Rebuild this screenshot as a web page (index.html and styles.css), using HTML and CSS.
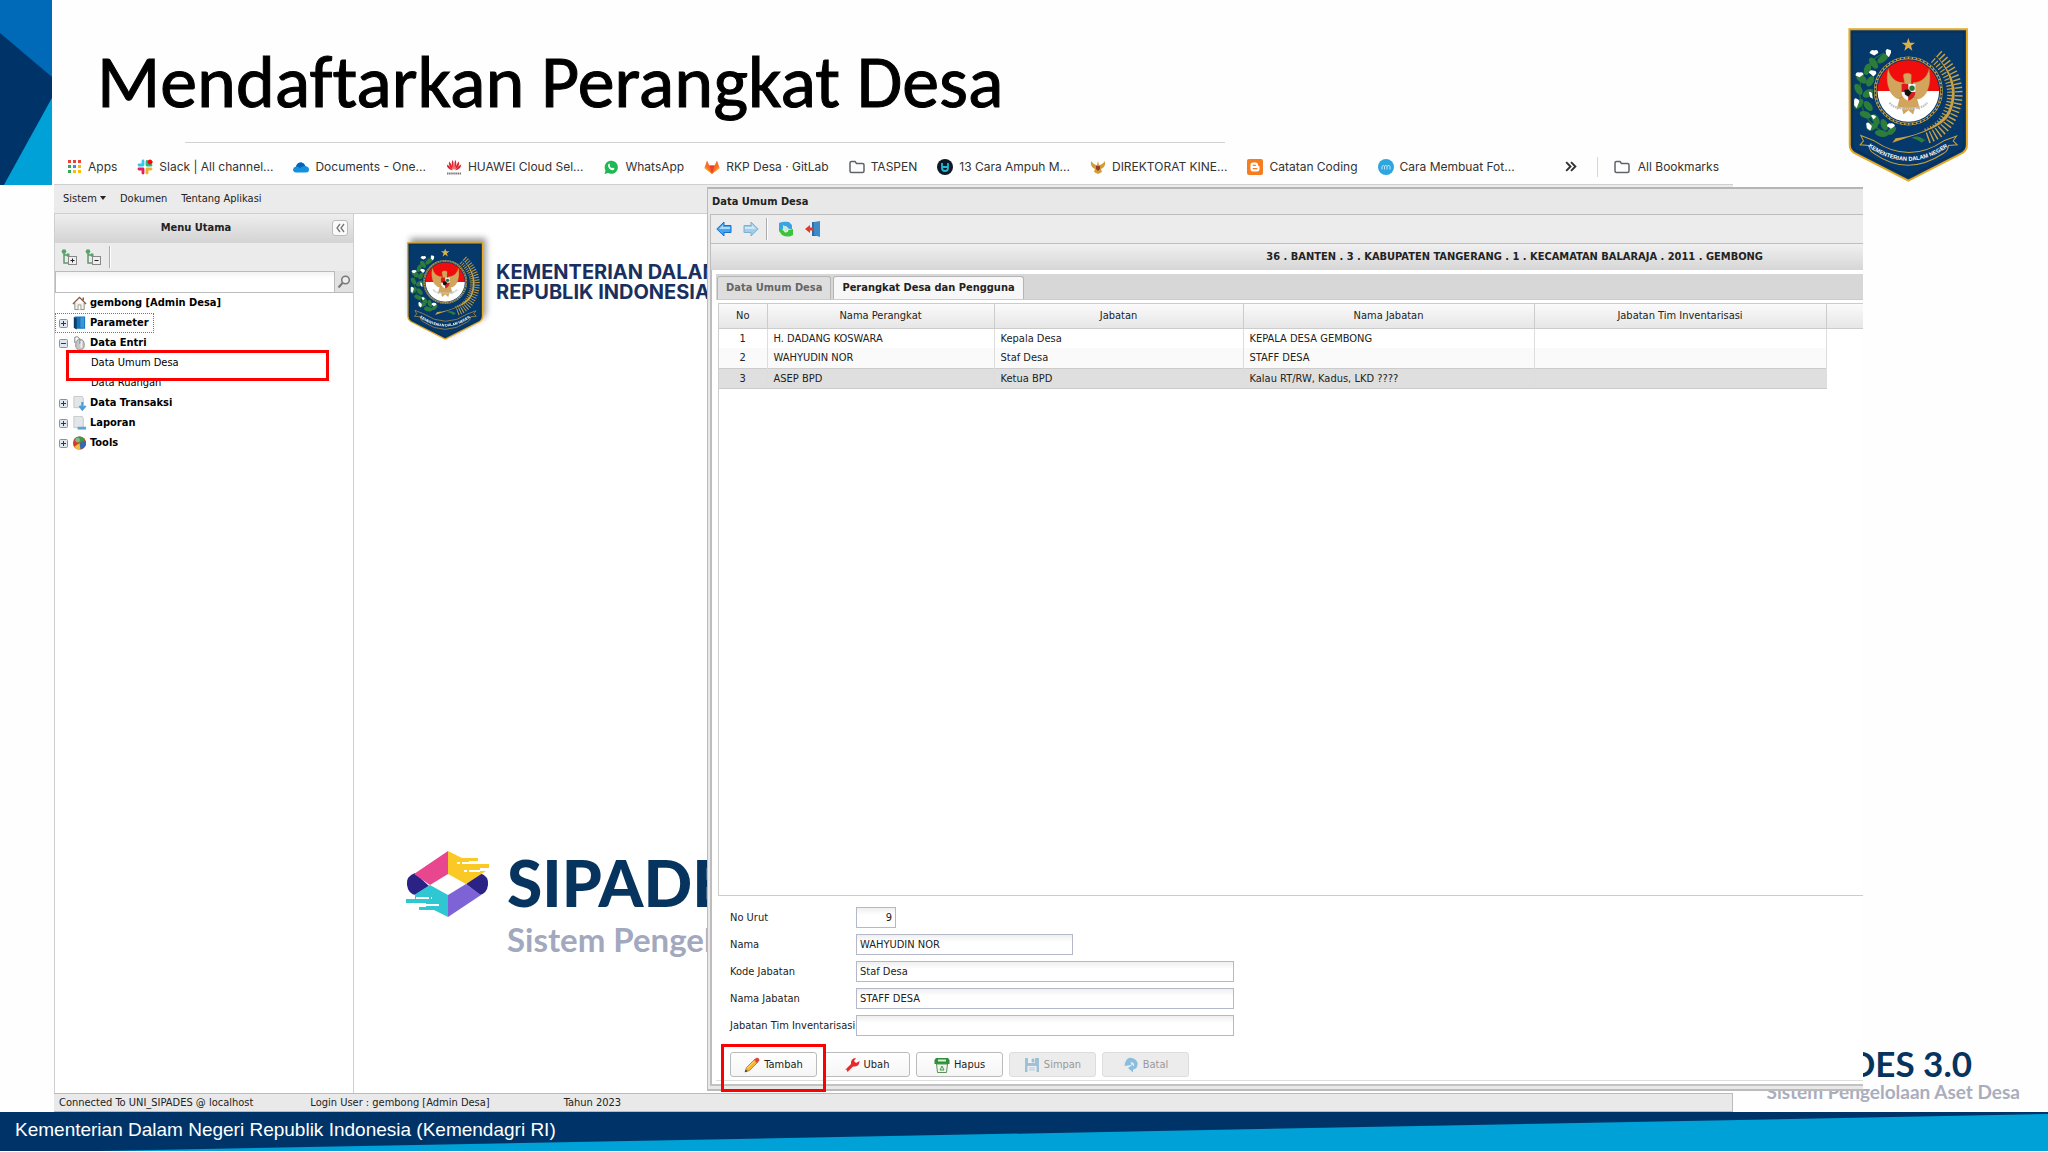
FILE: index.html
```
<!DOCTYPE html>
<html lang="id">
<head>
    <meta charset="UTF-8">
    <meta name="viewport" content="width=device-width, initial-scale=1.0">
    <title>Mendaftarkan Perangkat Desa</title>
    <link rel="stylesheet" href="styles.css">
</head>
<body>

<!-- shared drawings -->
<svg class="defs" width="0" height="0" aria-hidden="true">
  <symbol id="emblem" viewBox="82 55 358 460">
    <path d="M86 59H437V404Q437 420 424 428L262 511L100 428Q87 420 87 404Z" fill="#06396b" stroke="#e5a823" stroke-width="6"/>
    <path d="M95 67H428V402Q428 414 418 420L262 500L105 420Q96 414 96 402Z" fill="none" stroke="#0a2c52" stroke-width="3"/>
    <path d="M262 85l5 14 15 0-12 9 4 15-12-9-12 9 4-15-12-9 15 0z" fill="#d9b04c"/>
    <!-- cotton -->
    <path d="M190 130C140 150 110 210 118 260C124 320 160 365 215 372" fill="none" stroke="#1d6b3a" stroke-width="4"/>
    <g fill="#2c7d3c">
      <ellipse cx="186" cy="146" rx="20" ry="10" transform="rotate(-40 186 146)"/>
      <ellipse cx="158" cy="160" rx="19" ry="10" transform="rotate(55 158 160)"/>
      <ellipse cx="140" cy="178" rx="18" ry="10" transform="rotate(-70 140 178)"/>
      <ellipse cx="122" cy="206" rx="19" ry="11" transform="rotate(40 122 206)"/>
      <ellipse cx="148" cy="214" rx="17" ry="10" transform="rotate(-60 148 214)"/>
      <ellipse cx="113" cy="238" rx="18" ry="10" transform="rotate(60 113 238)"/>
      <ellipse cx="142" cy="250" rx="18" ry="11" transform="rotate(-30 142 250)"/>
      <ellipse cx="114" cy="282" rx="18" ry="10" transform="rotate(-50 114 282)"/>
      <ellipse cx="142" cy="288" rx="18" ry="10" transform="rotate(50 142 288)"/>
      <ellipse cx="134" cy="314" rx="18" ry="10" transform="rotate(20 134 314)"/>
      <ellipse cx="164" cy="328" rx="18" ry="10" transform="rotate(60 164 328)"/>
      <ellipse cx="154" cy="350" rx="18" ry="10" transform="rotate(-20 154 350)"/>
      <ellipse cx="190" cy="344" rx="18" ry="10" transform="rotate(70 190 344)"/>
      <ellipse cx="182" cy="370" rx="20" ry="10" transform="rotate(10 182 370)"/>
      <ellipse cx="212" cy="362" rx="16" ry="9" transform="rotate(-40 212 362)"/>
      <path d="M262 382Q290 372 312 390L302 398Q286 384 262 382Z"/>
    </g>
    <g fill="#fff">
      <path d="M146 130q4-12 14-8q12-4 12 8l-12 7z"/>
      <path d="M194 124q4-10 10-4q8-2 6 10l-6 12-8-8z"/>
      <path d="M104 196q2-12 12-8q10-4 12 6l-12 8z"/>
      <path d="M144 188q4-10 12-6q12 0 10 10l-8 8z"/>
      <path d="M100 270q2-8 8-4q10 4 6 12l-6 16-8-8z"/>
      <path d="M144 246q8-2 10 6l2 14-8-4z"/>
      <path d="M136 340q6-6 10 0q8 6 6 12l-4 10-10-8z"/>
      <path d="M198 348q2-10 10-8q12-2 14 8l-12 8z"/>
      <path d="M150 316q10-4 16 4l-8 8z"/>
    </g>
    <!-- rice -->
    <path d="M345 140C400 190 415 250 388 310C372 345 350 368 310 380" fill="none" stroke="#c9a042" stroke-width="46" stroke-dasharray="4 7"/>
    <path d="M330 130C400 190 412 250 385 310C365 352 300 372 214 398" fill="none" stroke="#06396b" stroke-width="6"/>
    <path d="M340 134C402 190 414 250 387 310C365 355 300 368 214 398L224 384C290 378 350 350 380 306C404 250 394 190 340 134Z" fill="#c9a042"/>
    <circle cx="262" cy="243" r="106" fill="#06396b"/>
    <circle cx="262" cy="243" r="99" fill="none" stroke="#c9a042" stroke-width="8"/>
    <circle cx="262" cy="243" r="99" fill="none" stroke="#06396b" stroke-width="4" stroke-dasharray="8 4"/>
    <path d="M170 243a92 92 0 0 1 184 0z" fill="#f20d0d"/>
    <path d="M170 243a92 92 0 0 0 184 0z" fill="#fff"/>
    <!-- garuda -->
    <g fill="#d3a55c" stroke="#a97b35" stroke-width="1">
      <path d="M248 218C222 218 206 200 202 176C194 210 200 240 218 258C230 270 242 268 250 262Z"/>
      <path d="M276 218C302 218 320 200 324 176C330 210 326 240 308 258C296 270 284 268 276 262Z"/>
      <path d="M250 226C252 206 242 198 250 192Q262 186 271 194L270 226Z"/>
      <path d="M238 262L228 298L242 290L248 312L262 300L276 312L282 290L296 298L286 262Z"/>
    </g>
    <path d="M242 222h20v24h-20z" fill="#e01818"/>
    <path d="M262 222h21v24h-21z" fill="#f4f4f4"/>
    <path d="M242 246h20v27q-20-8-20-27z" fill="#f4f4f4"/>
    <path d="M262 246h21q0 18-21 27z" fill="#d42020"/>
    <circle cx="273" cy="235" r="8" fill="#26783a"/>
    <path d="M250 240l12-2 10 10-10 12-10-6z" fill="#111"/>
    <path d="M206 278q8 12 22 14q34 8 68 0q14-2 22-14" fill="none" stroke="#c4c4c4" stroke-width="7" stroke-dasharray="5 2"/>
    <!-- ribbon -->
    <path d="M160 392L120 376L128 392L118 404L144 406Q146 424 160 430Q260 500 366 430Q380 424 382 406L408 404L396 392L406 378L368 392Q264 462 160 392Z" fill="#06396b" stroke="#c9a042" stroke-width="3"/>
    <path id="ribbon-line" d="M146 412Q262 492 380 410" fill="none"/>
    <text class="ribbon-text"><textPath href="#ribbon-line" startOffset="50%">KEMENTERIAN DALAM NEGERI</textPath></text>
  </symbol>
  <symbol id="folder" viewBox="0 0 16 16">
    <path d="M1 4Q1 2.500 2.500 2.500H6L7.500 4.500H13.500Q15 4.500 15 6V12Q15 13.500 13.500 13.500H2.500Q1 13.500 1 12Z" fill="none" stroke="#5f6368" stroke-width="1.500"/>
  </symbol>
  <symbol id="plus" viewBox="0 0 9 9">
    <rect x=".5" y=".5" width="8" height="8" rx="1" fill="#dfe6ee" stroke="#8393a7"/>
    <path d="M2 4.500H7M4.500 2V7" stroke="#223a5e"/>
  </symbol>
  <symbol id="minus" viewBox="0 0 9 9">
    <rect x=".5" y=".5" width="8" height="8" rx="1" fill="#dfe6ee" stroke="#8393a7"/>
    <path d="M2 4.500H7" stroke="#223a5e"/>
  </symbol>
</svg>

<div class="slide">
  <svg class="corner" viewBox="0 0 52 185" aria-hidden="true">
    <path d="M0 0H52V185H0Z" fill="#0069b8"/>
    <path d="M0 33L52 77V98L4 185H0Z" fill="#003468"/>
    <path d="M52 98V185H4Z" fill="#00a1d6"/>
  </svg>

  <header class="slide-head">
    <h1>Mendaftarkan Perangkat Desa</h1>
    <svg class="ministry" role="img" aria-label="Kementerian Dalam Negeri"><use href="#emblem"/></svg>
  </header>

  <div class="brand">
    <p class="brand-name">DES 3.0</p>
    <p class="brand-sub">Sistem Pengelolaan Aset Desa</p>
  </div>

  <main class="shot">
    <nav class="bookmarks">
      <a href="#"><svg viewBox="0 0 16 16"><g fill="#ea4335"><path d="M2 1h3v3H2zM7 1h3v3H7zM12 1h3v3h-3z"/></g><path d="M2 6h3v3H2z" fill="#34a853"/><path d="M7 6h3v3H7z" fill="#4285f4"/><path d="M12 6h3v3h-3z" fill="#fbbc04"/><path d="M2 11h3v3H2z" fill="#34a853"/><path d="M7 11h3v3H7zM12 11h3v3h-3z" fill="#fbbc04"/></svg>Apps</a>
      <a href="#"><svg viewBox="0 0 16 16" fill="none" stroke-width="2.800" stroke-linecap="round"><path d="M6 2V6M2 6H6" stroke="#36c5f0"/><path d="M10 2.500V6M10 6h4" stroke="#2eb67d"/><path d="M10 10v4M10 10h4" stroke="#ecb22e"/><path d="M6 10v4M2 10h4" stroke="#e01e5a"/><circle cx="13" cy="3" r="2" fill="#f00" stroke="#f00" stroke-width="1"/></svg>Slack | All channel...</a>
      <a href="#"><svg viewBox="0 0 16 16"><path d="M3 13.500Q0 13 0 10.500Q.3 8 3 7.500Q4.500 3 8.500 3.500Q11.500 4 12.300 7Q16 7.500 16 10.500Q16 13.500 13 13.500Z" fill="#1490df"/><path d="M3 7.500Q4.500 3 8.500 3.500Q11.500 4 12.300 7Q9 7 7 9Q5 7 3 7.500Z" fill="#0364b8"/></svg>Documents - One...</a>
      <a href="#"><svg viewBox="0 0 16 16"><g fill="#e2232e"><path d="M7.600 11Q4.500 5 6.500 1Q8 2 7.600 11ZM8.400 11Q11.500 5 9.500 1Q8 2 8.400 11Z"/><path d="M7 11Q2 7 3 2.500Q6 5 7 11ZM9 11Q14 7 13 2.500Q10 5 9 11Z"/><path d="M6.500 11.500Q1 10 .8 5.500Q4.500 7 6.500 11.500ZM9.500 11.500Q15 10 15.200 5.500Q11.500 7 9.500 11.500Z"/></g><path d="M1 14.500H15" stroke="#777" stroke-width="2" stroke-dasharray="1.500 .6"/></svg>HUAWEI Cloud Sel...</a>
      <a href="#"><svg viewBox="0 0 16 16"><path d="M1.500 15L2.500 11.500A6.600 6.600 0 1 1 5 14Z" fill="#1fb855"/><path d="M5.500 5Q6.500 3.800 7 6Q6.500 7 7 7.500Q8 9 9 9Q10 8.400 11.500 9.500Q11 11.500 9.500 11.300Q5.500 10.500 5 6.500Z" fill="#fff"/></svg>WhatsApp</a>
      <a href="#"><svg viewBox="0 0 16 16"><path d="M8 15L0.500 9L3 1.500L5.500 6.500H10.500L13 1.500L15.500 9Z" fill="#fc6d26"/><path d="M8 15L5.500 6.500H10.500Z" fill="#e24329"/><path d="M8 15L.5 9L2 8ZM8 15L15.500 9L14 8Z" fill="#fca326"/></svg>RKP Desa · GitLab</a>
      <a href="#"><svg><use href="#folder"/></svg>TASPEN</a>
      <a href="#"><svg viewBox="0 0 16 16"><circle cx="8" cy="8" r="8" fill="#0b1a24"/><path d="M5 4V9Q5 12 8 12T11 9V4M5 8H11" fill="none" stroke="#23b7d9" stroke-width="1.800"/></svg>13 Cara Ampuh M...</a>
      <a href="#"><svg viewBox="0 0 16 16"><path d="M7 6Q4 6 1 2Q0 8 5 10L4 13L8 15L12 13L11 10Q16 8 15 2Q12 6 9 6L8 2Z" fill="#d29c36"/><path d="M6 7H10V10L8 12L6 10Z" fill="#9c3b23"/></svg>DIREKTORAT KINE...</a>
      <a href="#"><svg viewBox="0 0 16 16"><rect width="16" height="16" rx="2" fill="#f57d20"/><path d="M6 3.500H8.500Q11 3.500 11 6Q11 7 12 7Q12.500 7.200 12.500 8V10Q12.500 12.500 10 12.500H6Q3.500 12.500 3.500 10V6Q3.500 3.500 6 3.500Z" fill="#fff"/><path d="M6.200 6.300H8.500M6.200 9.700H9.800" stroke="#f57d20" stroke-width="1.300" stroke-linecap="round"/></svg>Catatan Coding</a>
      <a href="#"><svg viewBox="0 0 16 16"><circle cx="8" cy="8" r="8" fill="#2da6e0"/><path d="M4 10.500V7.500Q6 5 6.500 7.500V10.500M6.500 7.500Q8.500 5 9 7.500V10.500M9 7.500Q11.500 5 12 7.500V10.500" fill="none" stroke="#bfe6f8"/></svg>Cara Membuat Fot...</a>
      <button class="more" type="button" aria-label="Lainnya"><svg viewBox="0 0 12 12"><path d="M2 2L6 6L2 10M6.500 2L10.500 6L6.500 10" fill="none" stroke="#333" stroke-width="1.800"/></svg></button>
      <a class="all" href="#"><svg><use href="#folder"/></svg>All Bookmarks</a>
    </nav>

    <div class="app">
      <nav class="menubar">
        <button type="button">Sistem <span class="caret"></span></button>
        <button type="button">Dokumen</button>
        <button type="button">Tentang Aplikasi</button>
      </nav>

      <div class="workspace">
        <aside class="sidebar">
          <div class="side-head">
            <h2>Menu Utama</h2>
            <button type="button" aria-label="Ciutkan"><svg viewBox="0 0 10 10"><path d="M5 1L2 5L5 9M9 1L6 5L9 9" fill="none" stroke="#777" stroke-width="1.300"/></svg></button>
          </div>
          <div class="side-tools">
            <button type="button" aria-label="Buka semua"><svg viewBox="0 0 16 16"><path d="M3 3V14H7M3 6H7" fill="none" stroke="#5c9a6a" stroke-width="1.500"/><circle cx="3" cy="2.500" r="2.300" fill="#58a468"/><circle cx="7" cy="6" r="1.700" fill="#58a468"/><rect x="7.500" y="7.500" width="8" height="8" fill="#eee" stroke="#888"/><path d="M9.500 11.500h4M11.500 9.500v4" stroke="#222"/></svg></button>
            <button type="button" aria-label="Tutup semua"><svg viewBox="0 0 16 16"><path d="M3 3V14H7M3 6H7" fill="none" stroke="#5c9a6a" stroke-width="1.500"/><circle cx="3" cy="2.500" r="2.300" fill="#58a468"/><circle cx="7" cy="6" r="1.700" fill="#58a468"/><rect x="7.500" y="7.500" width="8" height="8" fill="#eee" stroke="#888"/><path d="M9.500 11.500h4" stroke="#222"/></svg></button>
            <span class="sep"></span>
          </div>
          <form class="search">
            <input type="text" aria-label="Cari menu">
            <button type="button" aria-label="Cari"><svg viewBox="0 0 14 14"><circle cx="8.500" cy="5" r="3.800" fill="#eee" stroke="#777" stroke-width="1.500"/><path d="M5.500 8L1.500 12.500" stroke="#777" stroke-width="2"/></svg></button>
          </form>
          <ul class="tree">
            <li><a href="#"><span class="twig"></span><svg viewBox="0 0 16 16"><path d="M3 8V15H13V8" fill="#f7f0e2" stroke="#8a8a8a"/><path d="M1 9L8 2L15 9M12 5V2" fill="none" stroke="#8b5a44" stroke-width="1.500"/><path d="M6.500 15V10H9.500V15" fill="#fff" stroke="#999"/></svg>gembong [Admin Desa]</a></li>
            <li><a class="focused" href="#"><svg class="twig"><use href="#plus"/></svg><svg viewBox="0 0 16 16"><path d="M3 1H14V14H4L2 13V2Z" fill="#1874b8"/><path d="M2 2L5 3V15L2 13Z" fill="#0c3e66"/><path d="M9 2H13V13H9Z" fill="#3a98d8"/></svg>Parameter</a></li>
            <li><a href="#"><svg class="twig"><use href="#minus"/></svg><svg viewBox="0 0 16 16"><rect x="4" y="4" width="9" height="11.500" rx="4.500" fill="#c6c6c6" stroke="#8a8a8a"/><path d="M8.500 5V9M8 4Q7 0 3 2V8" fill="none" stroke="#777"/><path d="M10 6V13" stroke="#eee" stroke-width="2"/></svg>Data Entri</a>
              <ul>
                <li class="marked"><a href="#">Data Umum Desa</a></li>
                <li><a href="#">Data Ruangan</a></li>
              </ul>
            </li>
            <li><a href="#"><svg class="twig"><use href="#plus"/></svg><svg viewBox="0 0 16 16"><path d="M2 1H11L12 3V13H2Z" fill="#e3e6e8" stroke="#c3c8cc"/><path d="M11 7V14M8 11L11 15L14.500 11" fill="none" stroke="#4d9bd0" stroke-width="2.200"/></svg>Data Transaksi</a></li>
            <li><a href="#"><svg class="twig"><use href="#plus"/></svg><svg viewBox="0 0 16 16"><path d="M2 1H11L12 3V13H2Z" fill="#e3e6e8" stroke="#c3c8cc"/><path d="M6 13.500H15" stroke="#5da5d4" stroke-width="3"/></svg>Laporan</a></li>
            <li><a href="#"><svg class="twig"><use href="#plus"/></svg><svg viewBox="0 0 16 16"><circle cx="8" cy="8" r="7" fill="#d63a2c"/><path d="M8 8L2 4.500A7 7 0 0 1 14 4.500Z" fill="#3b9a4a"/><path d="M8 8L14.500 5.500A7 7 0 0 1 9 15Z" fill="#3569b4"/><path d="M8 8L9 15A7 7 0 0 1 2.500 12Z" fill="#eec23c"/><circle cx="6" cy="5" r="2.500" fill="#fff" opacity=".35"/></svg>Tools</a></li>
          </ul>
        </aside>

        <section class="desktop">
          <div class="org">
            <svg class="org-logo"><use href="#emblem"/></svg>
            <p>KEMENTERIAN DALAM<br>REPUBLIK INDONESIA</p>
          </div>
          <div class="product">
            <svg class="product-logo" viewBox="0 0 83 66" aria-hidden="true">
              <path d="M9 22Q0 25 1 34Q2 42 9 44L23 35Z" fill="#2b2286"/>
              <path d="M74 22Q83 25 82 34Q81 42 74 44L60 33Z" fill="#2b2286"/>
              <path d="M42 0V23L24 34L8 23Z" fill="#e8478f"/>
              <path d="M42 0L56 7H72V10H63V13H83V17H74V20H80L60 33L42 23Z" fill="#fbc926"/>
              <path d="M51 12H63M58 20H74" stroke="#fff" stroke-width="2" stroke-dasharray="3 2 20"/>
              <path d="M42 44V66L28 59H13V56H20V52H0V48H9V44H8L24 34Z" fill="#2fc8d2"/>
              <path d="M10 47H26M20 54H34" stroke="#fff" stroke-width="2" stroke-dasharray="13 2 3"/>
              <path d="M42 44L60 33L75 44L42 66Z" fill="#7e63d6"/>
            </svg>
            <div>
              <p class="product-name">SIPADES</p>
              <p class="product-sub">Sistem Pengelolaan</p>
            </div>
          </div>
        </section>
      </div>

      <footer class="status">
        <span>Connected To UNI_SIPADES @ localhost</span>
        <span>Login User : gembong [Admin Desa]</span>
        <span>Tahun 2023</span>
      </footer>

      <section class="window">
        <h2 class="win-title">Data Umum Desa</h2>
        <div class="win-tools">
          <button type="button" aria-label="Sebelumnya"><svg viewBox="0 0 16 16"><path d="M.8 8L8 1V4.500H15V11.500H8V15Z" fill="#45a5f0" stroke="#1d6fc4"/><path d="M3 8L7 4V6H14V8Z" fill="#a7dafb"/></svg></button>
          <button type="button" aria-label="Berikutnya"><svg viewBox="0 0 16 16"><path d="M15.200 8L8 1V4.500H1V11.500H8V15Z" fill="#9fcdea" stroke="#7fb0d2"/><path d="M13 8L9 4V6H2V8Z" fill="#cfe9f8"/></svg></button>
          <span class="sep"></span>
          <button type="button" aria-label="Muat ulang"><svg viewBox="0 0 16 16"><path d="M1 9V2Q5 0 11 1L14 4V8H11L8 5Q5 5 5 8Z" fill="#3aa5e0"/><path d="M5 4L11 8L8 11L5 8Z" fill="#c4ecd8"/><path d="M15 8V14Q10 17 4 14L1 10V8H4L7 11.500Q10 12 10.500 9Z" fill="#3cc23b"/></svg></button>
          <button type="button" aria-label="Keluar"><svg viewBox="0 0 16 16"><path d="M7 1H15V15H7Z" fill="#2d6da8"/><path d="M9 1L15 0V16L9 14Z" fill="#3d8bc9"/><path d="M0 8L5 4V6.500H9V9.500H5V12Z" fill="#df3a30"/></svg></button>
        </div>
        <p class="win-path">36 . BANTEN . 3 . KABUPATEN TANGERANG . 1 . KECAMATAN BALARAJA . 2011 . GEMBONG</p>
        <div class="win-body">
          <div class="tabs" role="tablist">
            <button type="button" role="tab">Data Umum Desa</button>
            <button class="active" type="button" role="tab" aria-selected="true">Perangkat Desa dan Pengguna</button>
          </div>
          <div class="grid">
            <table>
              <thead>
                <tr><th class="c-no">No</th><th class="c-nama">Nama Perangkat</th><th class="c-jab">Jabatan</th><th class="c-njab">Nama Jabatan</th><th class="c-tim">Jabatan Tim Inventarisasi</th><th></th></tr>
              </thead>
              <tbody>
                <tr><td>1</td><td>H. DADANG KOSWARA</td><td>Kepala Desa</td><td>KEPALA DESA GEMBONG</td><td></td></tr>
                <tr><td>2</td><td>WAHYUDIN NOR</td><td>Staf Desa</td><td>STAFF DESA</td><td></td></tr>
                <tr class="selected"><td>3</td><td>ASEP BPD</td><td>Ketua BPD</td><td>Kalau RT/RW, Kadus, LKD ????</td><td></td></tr>
              </tbody>
            </table>
          </div>
          <form class="detail">
            <div class="field"><label for="urut">No Urut</label><input class="w-no" id="urut" type="text" value="9"></div>
            <div class="field"><label for="nama">Nama</label><input class="w-nama" id="nama" type="text" value="WAHYUDIN NOR"></div>
            <div class="field"><label for="kode">Kode Jabatan</label><input id="kode" type="text" value="Staf Desa"></div>
            <div class="field"><label for="njab">Nama Jabatan</label><input id="njab" type="text" value="STAFF DESA"></div>
            <div class="field"><label for="tim">Jabatan Tim Inventarisasi</label><input id="tim" type="text"></div>
            <div class="actions">
              <span class="marked-btn"><button type="button"><svg viewBox="0 0 16 16"><path d="M1 15L2.500 10.500L11 2L14 5L5.500 13.500Z" fill="#f7b42c" stroke="#b9731a" stroke-width=".8"/><path d="M10 3L12 1Q14 0 15 2Q16 3 15 4L13 6Z" fill="#e0433a"/><path d="M1 15L1.800 12.500L3.500 14.200Z" fill="#333"/><path d="M3.500 11L11 3.500" stroke="#fde08a"/></svg>Tambah</button></span>
              <button type="button"><svg viewBox="0 0 16 16"><path d="M1 13L7 7Q6.500 3 9.500 1.500L12 1L10 4L12 6L15.500 4Q15.500 9 11 9.500L9 9.500L3.500 15L2.500 12.500Z" fill="#e8282b"/></svg>Ubah</button>
              <button type="button"><svg viewBox="0 0 16 16"><path d="M2 1H14L15.500 3V7H.5V3Z" fill="#2f8f3a"/><path d="M2.500 7H13.500L12.500 15.500H3.500Z" fill="#eef5ec" stroke="#5f8f5c"/><path d="M4 3.500H12" stroke="#d9f5d4" stroke-width="2"/><path d="M8 9L6 13H10Z" fill="none" stroke="#3c9a40"/></svg>Hapus</button>
              <button type="button" disabled><svg viewBox="0 0 16 16"><path d="M1 1H15V15H1Z" fill="#6ba6cc"/><path d="M4 1H11V6H4ZM3.500 9H12.500V15H3.500Z" fill="#eef4f8"/><path d="M8 2H10V5H8ZM5 11H11M5 13H11" stroke="#7c9db3" stroke-width=".8" fill="#7c9db3"/></svg>Simpan</button>
              <button type="button" disabled><svg viewBox="0 0 16 16"><path d="M2 6Q4 0 9 1Q15 2.500 14.500 8Q14 12 10 12.500V15.500L5 11L10 7.500V9.500Q11.500 9 11 7Q10 4.500 7.500 5.500L8.500 8L1.500 9Z" fill="#4aa0d6"/></svg>Batal</button>
            </div>
          </form>
        </div>
      </section>
    </div>
  </main>

  <footer class="slide-foot">
    <svg viewBox="0 0 2048 38" preserveAspectRatio="none" aria-hidden="true"><path d="M100 38L2048 2V38Z" fill="#00a1d6"/></svg>
    <p>Kementerian Dalam Negeri Republik Indonesia (Kemendagri RI)</p>
  </footer>
</div>

</body>
</html>
```
FILE: styles.css
```
*{
  margin: 0;
  padding: 0;
  box-sizing: border-box;
}
body{
  background: #fefefe;
  font-family: "DejaVu Sans Condensed", "Noto Sans", sans-serif;
  font-size: 11px;
  line-height: 20px;
  color: #222;
}
button, input{
  font: inherit;
  color: inherit;
}
button{
  border: 0;
  background: none;
}
a{
  color: inherit;
  text-decoration: none;
}
ul{
  list-style: none;
}
.defs{
  display: none;
}
.slide{
  position: relative;
  display: flex;
  flex-direction: column;
  min-height: 100vh;
  overflow: hidden;
}
.corner{
  position: absolute;
  top: 0;
  left: 0;
  width: 52px;
  height: 185px;
}

/* slide heading */
.slide-head{
  display: flex;
  justify-content: space-between;
  height: 142px;
  padding: 28px 80px 0 97px;
}
h1{
  font-family: Carlito, Lato, sans-serif;
  font-size: 74px;
  font-weight: 400;
  line-height: 108px;
  color: #000;
  white-space: nowrap;
  font-variant-ligatures: none;
  -webkit-text-stroke: 1px #000;
}
.ministry{
  width: 120px;
  height: 154px;
}
.ribbon-text{
  font-family: "Liberation Sans", sans-serif;
  font-size: 17px;
  font-weight: bold;
  fill: #fff;
  text-anchor: middle;
}

/* product name behind the window */
.brand{
  position: absolute;
  right: 28px;
  bottom: 49px;
  font-family: Lato, sans-serif;
  font-weight: bold;
  text-align: right;
}
.brand-name{
  padding-right: 48px;
  font-size: 35px;
  line-height: 36px;
  color: #07345f;
}
.brand-sub{
  font-size: 19px;
  line-height: 22px;
  color: #a9adbd;
}

.shot{
  position: relative;
  flex: 1;
  display: flex;
  flex-direction: column;
  margin: 0 315px 0 54px;
}
.bookmarks{
  display: flex;
  align-items: center;
  gap: 20px;
  height: 43px;
  padding: 7px 14px 0 12px;
  border-bottom: 1px solid #cfcfcf;
  font-family: Inter, sans-serif;
  font-size: 12px;
  color: #333;
  white-space: nowrap;
}
.bookmarks::before{
  content: "";
  position: absolute;
  top: 0;
  left: 131px;
  right: 508px;
  border-top: 1px solid #d2d2d2;
}
.bookmarks a{
  display: flex;
  align-items: center;
  gap: 6px;
}
.bookmarks svg{
  width: 16px;
  height: 16px;
}
.bookmarks .more{
  display: flex;
  margin-left: auto;
}
.more svg{
  width: 13px;
  height: 13px;
}
.bookmarks .all{
  gap: 8px;
  padding-left: 16px;
  border-left: 1px solid #d5d5dd;
}

/* application */
.app{
  position: relative;
  flex: 1;
  display: flex;
  flex-direction: column;
}
.menubar{
  display: flex;
  gap: 14px;
  height: 29px;
  padding: 4px 9px;
  background: #ebebeb;
  border-bottom: 1px solid #cfcfcf;
}
.caret{
  display: inline-block;
  border: 3px solid transparent;
  border-top: 4px solid #222;
  border-bottom: 0;
  vertical-align: 2px;
}
.workspace{
  flex: 1;
  display: flex;
}
.sidebar{
  width: 300px;
  background: #fff;
  border: solid #cfcfcf;
  border-width: 0 1px;
}
.side-head{
  display: flex;
  align-items: center;
  height: 29px;
  padding: 0 5px 2px;
  background: linear-gradient(#eee, #d3d3d3);
}
h2{
  font-size: 11px;
}
.side-head h2{
  flex: 1;
  text-align: center;
}
.side-head button{
  display: flex;
  padding: 2px;
  background: #fafafa;
  border: 1px solid #bbb;
  border-radius: 3px;
}
.side-head svg{
  width: 10px;
  height: 10px;
}
.side-tools{
  display: flex;
  align-items: center;
  gap: 8px;
  height: 28px;
  padding-left: 6px;
  background: #ebebeb;
}
.side-tools button, .win-tools button{
  display: flex;
}
.side-tools svg, .win-tools svg{
  width: 16px;
  height: 16px;
}
.sep{
  width: 2px;
  height: 22px;
  background: #fff;
  border-left: 1px solid #aaa;
}
.search{
  display: flex;
  height: 22px;
}
.search input{
  flex: 1;
  min-width: 0;
  border: 1px solid #bbb;
  background: linear-gradient(#f2f2f2, #fff 6px);
}
.search button{
  display: flex;
  align-items: center;
  padding: 0 2px;
  background: #e2e2e2;
  border-bottom: 1px solid #bbb;
}
.search svg{
  width: 14px;
  height: 14px;
}
.tree{
  color: #000;
}
.tree a{
  display: flex;
  align-items: center;
  gap: 3px;
  width: fit-content;
  height: 20px;
  padding: 0 5px 0 4px;
  font-weight: bold;
  white-space: nowrap;
}
.tree svg{
  width: 15px;
  height: 16px;
}
.tree .twig{
  width: 9px;
  height: 9px;
  margin-right: 1px;
}
.tree .focused{
  outline: 1px dotted #777;
  outline-offset: -1px;
}
.tree ul a{
  padding-left: 36px;
  font-weight: normal;
}
.marked{
  position: relative;
}
.marked::after{
  content: "";
  position: absolute;
  inset: -3px 24px -8px 11px;
  border: 3px solid #f00;
}

.desktop{
  flex: 1;
  display: flex;
  flex-direction: column;
  justify-content: space-between;
  padding: 28px 0 130px 52px;
  background: #fff;
  overflow: hidden;
}
.org{
  display: flex;
  gap: 12px;
  font-family: Inter, sans-serif;
  font-size: 20px;
  font-weight: 700;
  line-height: 20px;
  color: #19305f;
  white-space: nowrap;
}
.org p{
  padding-top: 20px;
}
.org-logo{
  width: 78px;
  height: 98px;
  filter: drop-shadow(3px -4px 3px rgba(0, 0, 0, .4));
}
.product{
  display: flex;
  gap: 18px;
  font-family: Lato, sans-serif;
  font-weight: bold;
  white-space: nowrap;
}
.product-logo{
  width: 83px;
  height: 66px;
}
.product-name{
  font-size: 64px;
  font-weight: 900;
  line-height: 64px;
  color: #07345f;
}
.product-sub{
  font-size: 33px;
  line-height: 48px;
  color: #a2a8be;
}
.status{
  display: flex;
  gap: 57px;
  height: 19px;
  padding-left: 5px;
  background: #e9e9e9;
  border: 1px solid #bbb;
  border-left: 0;
  line-height: 18px;
}
.status span:last-child{
  margin-left: 17px;
}

/* floating window, cut off at the right */
.window{
  position: absolute;
  top: 2px;
  bottom: 21px;
  left: 653px;
  right: -130px;
  display: flex;
  flex-direction: column;
  background: #e8e8e8;
  border-top: 2px solid #b5b5b5;
  border-left: 1px solid #bbb;
  border-bottom: 2px solid #bbb;
}
.win-title{
  height: 25px;
  padding-left: 4px;
  line-height: 25px;
}
.win-tools{
  display: flex;
  align-items: center;
  gap: 11px;
  height: 30px;
  margin-left: 2px;
  padding-left: 5px;
  background: #ececec;
  border: 1px solid #bdbdbd;
  border-right: 0;
}
.win-tools .sep{
  margin: 0 -1px 0 -4px;
}
.win-path{
  height: 26px;
  margin-left: 2px;
  padding-right: 100px;
  background: linear-gradient(#f0f0f0, #d6d6d6);
  border-left: 1px solid #bdbdbd;
  line-height: 26px;
  font-weight: bold;
  text-align: right;
}
.win-body{
  flex: 1;
  display: flex;
  flex-direction: column;
  margin: 0 0 3px 2px;
  padding: 4px 0 3px 4px;
  background: #fff;
  border-left: 2px solid #bdbdbd;
  border-bottom: 2px solid #c2c2c2;
}
.tabs{
  display: flex;
  align-items: end;
  gap: 2px;
  height: 26px;
  padding-left: 1px;
  background: #d7d7d7;
  border-bottom: 1px solid #ccc;
}
.tabs button{
  height: 23px;
  padding: 0 8px;
  background: #dedede;
  border: 1px solid #b5b5b5;
  border-bottom: 0;
  border-radius: 3px 3px 0 0;
  font-weight: bold;
  color: #666;
}
.tabs .active{
  background: #f7f7f7;
  color: #222;
}
.grid{
  flex: 1;
  margin: 3px 0 0 2px;
  border: 1px solid #ccc;
  border-right: 0;
}
table{
  width: 100%;
  table-layout: fixed;
  border-collapse: collapse;
}
th{
  height: 24px;
  background: linear-gradient(#fafafa, #e6e6e6);
  border-right: 1px solid #ccc;
  border-bottom: 1px solid #ccc;
  font-weight: normal;
}
th:last-child{
  border-right: 0;
}
td{
  height: 20px;
  padding: 0 6px;
  border-right: 1px solid #ddd;
  line-height: 19px;
}
td:first-child{
  text-align: center;
}
tbody tr:nth-child(2) td{
  background: #fafafa;
}
tbody .selected td{
  background: #dfdfdf;
  border-top: 1px solid #ccc;
  border-bottom: 1px solid #ccc;
}
.c-no{
  width: 48px;
}
.c-nama{
  width: 227px;
}
.c-jab{
  width: 249px;
}
.c-njab{
  width: 291px;
}
.c-tim{
  width: 292px;
}
.detail{
  display: flex;
  flex-direction: column;
  gap: 6px;
  padding: 11px 0 3px 14px;
  border-bottom: 1px solid #ddd;
}
.field{
  display: flex;
  align-items: center;
}
.field label{
  width: 126px;
  white-space: nowrap;
}
.field input{
  width: 378px;
  height: 21px;
  padding: 0 3px;
  border: 1px solid #b5b8c8;
  background: linear-gradient(#efefef, #fff 7px);
}
.field .w-no{
  width: 40px;
  text-align: right;
}
.field .w-nama{
  width: 217px;
}
.actions{
  display: flex;
  gap: 6px;
  margin-top: 10px;
}
.actions button{
  display: flex;
  align-items: center;
  justify-content: center;
  gap: 4px;
  width: 87px;
  height: 25px;
  background: linear-gradient(#fff, #f5f5f5);
  border: 1px solid #bbb;
  border-radius: 3px;
}
.actions button:disabled{
  background: #ececec;
  border-color: #ddd;
  color: #999;
}
.actions button:disabled svg{
  opacity: .6;
}
.actions svg{
  width: 16px;
  height: 16px;
}
.marked-btn{
  position: relative;
}
.marked-btn::after{
  content: "";
  position: absolute;
  inset: -8px -9px -15px -9px;
  border: 3px solid #f00;
}

.slide-foot{
  position: relative;
  height: 40px;
  background: #003468;
  border-bottom: 1px solid #fff;
}
.slide-foot svg{
  position: absolute;
  inset: 0;
  width: 100%;
  height: 100%;
}
.slide-foot p{
  position: relative;
  padding-left: 15px;
  font-family: "Liberation Sans", sans-serif;
  font-size: 19px;
  line-height: 36px;
  color: #fff;
}
```
